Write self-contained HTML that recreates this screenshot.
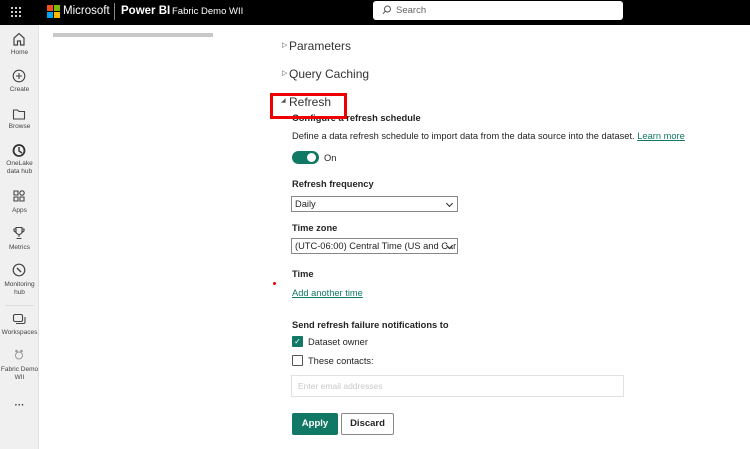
<!DOCTYPE html>
<html><head><style>
*{margin:0;padding:0;box-sizing:border-box}
body{width:750px;height:449px;overflow:hidden;background:#fff;font-family:"Liberation Sans",sans-serif;color:#252423;position:relative}
.a{position:absolute;white-space:nowrap}
.top{left:0;top:0;width:750px;height:25px;background:#000}
.side{left:0;top:25px;width:39px;height:424px;background:#f0f0f0;border-right:1px solid #e1e1e1}
.nl{font-size:6.5px;color:#444;text-align:center;width:39px;left:0;line-height:8px}
.ic{left:12px;width:14px;height:14px}
.h{font-size:12px;color:#333}
.b{font-size:9.3px;font-weight:bold}
.t{font-size:9.3px}
.sel{border:1px solid #8a8886;background:#fff;font-size:9.3px;padding:2px 3px;height:16px;width:167px;left:291px}
.sel:after{content:"";position:absolute;right:5px;top:4px;width:4px;height:4px;border-right:1.5px solid #222;border-bottom:1.5px solid #222;transform:rotate(45deg);background:#fff}
</style></head><body>
<div class="a top"></div>
<div class="a" style="left:10px;top:6px;width:12px;height:12px;background-image:radial-gradient(circle,#fff 0.9px,transparent 1.1px);background-size:4px 4px"></div>
<div class="a" style="left:47px;top:5px;width:6px;height:6px;background:#f25022"></div>
<div class="a" style="left:54px;top:5px;width:6px;height:6px;background:#7fba00"></div>
<div class="a" style="left:47px;top:12px;width:6px;height:6px;background:#00a4ef"></div>
<div class="a" style="left:54px;top:12px;width:6px;height:6px;background:#ffb900"></div>
<div class="a" style="left:63px;top:5px;color:#fff;font-size:11.5px">Microsoft</div>
<div class="a" style="left:114px;top:3px;width:1px;height:17px;background:#888"></div>
<div class="a" style="left:121px;top:5px;color:#fff;font-size:11.5px;font-weight:bold">Power BI</div>
<div class="a" style="left:172px;top:6px;color:#fff;font-size:9.5px">Fabric Demo WII</div>
<div class="a" style="left:373px;top:1px;width:250px;height:19px;background:#fff;border-radius:3px"></div>
<svg class="a" style="left:382px;top:5px" width="10" height="10" viewBox="0 0 10 10"><circle cx="5.5" cy="4" r="3" fill="none" stroke="#555" stroke-width="1"/><path d="M3.5 6L1 8.8" stroke="#555" stroke-width="1"/></svg>
<div class="a" style="left:396px;top:5px;font-size:9.5px;color:#666">Search</div>

<div class="a side"></div>
<svg class="a ic" style="top:32px" viewBox="0 0 14 14"><path d="M2 13V6L7 1.5 12 6v7H8.5V9h-3v4z" fill="none" stroke="#444" stroke-width="1.2"/></svg>
<div class="a nl" style="top:49px">Home</div>
<svg class="a ic" style="top:69px" viewBox="0 0 14 14"><circle cx="7" cy="7" r="5.8" fill="none" stroke="#444" stroke-width="1.1"/><path d="M7 4v6M4 7h6" stroke="#444" stroke-width="1.1"/></svg>
<div class="a nl" style="top:86px">Create</div>
<svg class="a ic" style="top:107px" viewBox="0 0 14 14"><path d="M1.5 3h4l1.5 1.5h5.5V12h-11z" fill="none" stroke="#444" stroke-width="1.1"/></svg>
<div class="a nl" style="top:123px">Browse</div>
<svg class="a ic" style="top:143px" viewBox="0 0 14 14"><circle cx="7" cy="7.5" r="5.5" fill="none" stroke="#333" stroke-width="1.8"/><path d="M7 4v4l3 2" stroke="#333" stroke-width="1.4" fill="none"/></svg>
<div class="a nl" style="top:160px">OneLake<br>data hub</div>
<svg class="a ic" style="top:189px" viewBox="0 0 14 14"><path d="M2 2h4v4H2zM2 8h4v4H2zM8 8h4v4H8z" fill="none" stroke="#444" stroke-width="1.1"/><circle cx="10" cy="4" r="2.2" fill="none" stroke="#444" stroke-width="1.1"/></svg>
<div class="a nl" style="top:207px">Apps</div>
<svg class="a ic" style="top:226px" viewBox="0 0 14 14"><path d="M4 1.5h6v4a3 3 0 0 1-6 0zM4 3H2v2l2 1.5M10 3h2v2l-2 1.5M7 8.5v2.5M4.5 12.5h5" fill="none" stroke="#444" stroke-width="1.1"/></svg>
<div class="a nl" style="top:244px">Metrics</div>
<svg class="a ic" style="top:263px" viewBox="0 0 14 14"><circle cx="7" cy="7" r="5.8" fill="none" stroke="#444" stroke-width="1.2"/><path d="M5 5l4 4" stroke="#444" stroke-width="1.4"/></svg>
<div class="a nl" style="top:281px">Monitoring<br>hub</div>
<div class="a" style="left:5px;top:305px;width:29px;height:1px;background:#ddd"></div>
<svg class="a ic" style="top:312px" viewBox="0 0 14 14"><rect x="1.5" y="2.5" width="9" height="7" rx="1.5" fill="none" stroke="#444" stroke-width="1.1"/><path d="M4 11.5h7.5a1.5 1.5 0 0 0 1.5-1.5V5" fill="none" stroke="#444" stroke-width="1.1"/></svg>
<div class="a nl" style="top:329px">Workspaces</div>
<svg class="a ic" style="top:348px" viewBox="0 0 14 14"><circle cx="7" cy="7.5" r="3.5" fill="none" stroke="#999" stroke-width="1"/><circle cx="4.5" cy="3" r="1.3" fill="#999"/><circle cx="9.5" cy="3" r="1.3" fill="#999"/></svg>
<div class="a nl" style="top:366px">Fabric Demo<br>WII</div>
<div class="a nl" style="top:402px;font-size:10px;font-weight:bold">···</div>

<div class="a" style="left:53px;top:33px;width:160px;height:4px;background:#c8c8c8"></div>

<div class="a" style="left:282px;top:41px;font-size:7px;color:#555">&#9655;</div>
<div class="a h" style="left:289px;top:39px">Parameters</div>
<div class="a" style="left:282px;top:69px;font-size:7px;color:#555">&#9655;</div>
<div class="a h" style="left:289px;top:67px">Query Caching</div>
<div class="a" style="left:281px;top:97px;font-size:6px;color:#555">&#9698;</div>
<div class="a h" style="left:289px;top:95px">Refresh</div>
<div class="a b" style="left:292px;top:113px">Configure a refresh schedule</div>
<div class="a" style="left:270px;top:93px;width:77px;height:26px;border:3px solid #e00"></div>
<div class="a t" style="left:292px;top:131px">Define a data refresh schedule to import data from the data source into the dataset. <span style="color:#117865;text-decoration:underline">Learn more</span></div>
<div class="a" style="left:292px;top:151px;width:27px;height:13px;border-radius:7px;background:#117865"></div>
<div class="a" style="left:307px;top:153px;width:9px;height:9px;border-radius:50%;background:#fff"></div>
<div class="a t" style="left:324px;top:153px">On</div>
<div class="a b" style="left:292px;top:179px">Refresh frequency</div>
<div class="a sel" style="top:196px">Daily</div>
<div class="a b" style="left:292px;top:223px">Time zone</div>
<div class="a sel" style="top:238px;overflow:hidden">(UTC-06:00) Central Time (US and Car</div>
<div class="a b" style="left:292px;top:269px">Time</div>
<div class="a" style="left:273px;top:282px;width:3px;height:3px;border-radius:50%;background:#e00"></div>
<div class="a t" style="left:292px;top:288px;color:#117865;text-decoration:underline">Add another time</div>
<div class="a b" style="left:292px;top:320px">Send refresh failure notifications to</div>
<div class="a" style="left:292px;top:336px;width:11px;height:11px;background:#117865;border-radius:1px;color:#fff;font-size:8px;line-height:11px;text-align:center">&#10003;</div>
<div class="a t" style="left:308px;top:337px">Dataset owner</div>
<div class="a" style="left:292px;top:355px;width:11px;height:11px;border:1px solid #555;border-radius:1px"></div>
<div class="a t" style="left:308px;top:356px">These contacts:</div>
<div class="a" style="left:291px;top:375px;width:333px;height:22px;border:1px solid #e1e1e1"></div>
<div class="a" style="left:298px;top:381px;font-size:8.5px;color:#c8c8c8">Enter email addresses</div>
<div class="a" style="left:292px;top:413px;width:46px;height:22px;background:#117865;border-radius:2px;color:#fff;font-size:9.5px;font-weight:bold;text-align:center;line-height:22px">Apply</div>
<div class="a" style="left:341px;top:413px;width:53px;height:22px;border:1px solid #8a8886;border-radius:2px;font-size:9.5px;font-weight:bold;text-align:center;line-height:20px">Discard</div>
</body></html>
